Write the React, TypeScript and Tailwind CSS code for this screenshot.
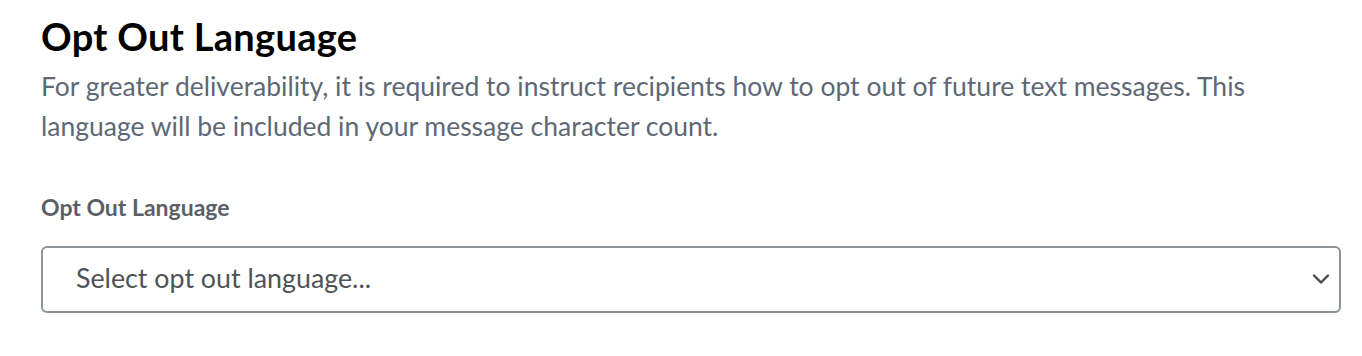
export default function App() {
  return (
    <div className="bg-white min-h-screen">
      <div className="px-[41px] pt-[13px] font-['Lato',sans-serif] w-[1381px]">
        <h2 className="text-[38px] leading-[46px] font-bold text-black tracking-[0.3px]">Opt Out Language</h2>
        <p className="mt-[7px] text-[26.5px] leading-[40px] text-[#5e6875] max-w-[1245px]">
          For greater deliverability, it is required to instruct recipients how to opt out of future text messages. This language will be included in your message character count.
        </p>
        <label className="block mt-[47px] text-[23px] leading-[28px] font-bold text-[#5a5f66]">Opt Out Language</label>
        <div className="relative mt-[25px] w-[1300px]">
          <select className="w-full h-[67px] appearance-none rounded-[6px] border-2 border-[#8e9397] bg-white pl-[33px] pr-[48px] pb-[2px] text-[26.8px] text-[#4f5357] outline-none">
            <option>Select opt out language...</option>
          </select>
          <svg className="pointer-events-none absolute right-[11px] top-[27px]" width="18" height="12" viewBox="0 0 18 12" fill="none">
            <path d="M2 2.5l7 7 7-7" stroke="#4a4a4a" strokeWidth="2.4" strokeLinecap="round" strokeLinejoin="round" />
          </svg>
        </div>
      </div>
    </div>
  )
}
